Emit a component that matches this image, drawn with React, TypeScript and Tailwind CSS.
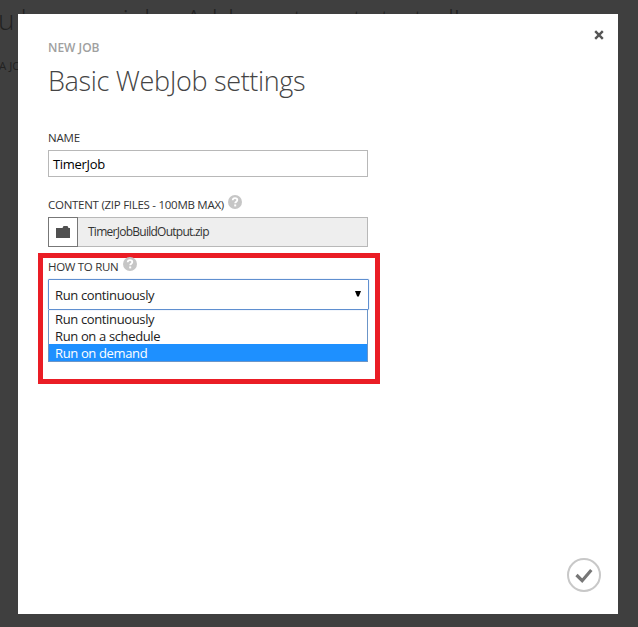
import React from 'react';

const RUN_MODES: readonly string[] = ['Run continuously', 'Run on a schedule', 'Run on demand'];

function HelpIcon({ className }: { readonly className: string }): React.JSX.Element {
  return (
    <svg className={className} width="14" height="14" viewBox="0 0 14 14">
      <circle cx="7" cy="7" r="7" fill="#c6c6c6" />
      <path
        d="M4.7 5.3C4.8 3.8 5.8 3.2 7 3.2c1.3 0 2.3.7 2.3 1.9 0 1.6-2.1 1.6-2.1 3.2"
        fill="none"
        stroke="#fff"
        strokeWidth="1.8"
      />
      <rect x="6.2" y="9.4" width="2" height="2" fill="#fff" />
    </svg>
  );
}

function FolderIcon(): React.JSX.Element {
  return (
    <svg width="14" height="12" viewBox="0 0 14 12">
      <path d="M0 2h6.5L7.5 0h4l1 2H14v10H0z" fill="#505050" />
    </svg>
  );
}

function Backdrop(): React.JSX.Element {
  return (
    <div className="h-full w-full whitespace-nowrap text-[#222]">
      <div className="-ml-[32px] text-[28px] leading-[38px] font-light tracking-[-0.63px]">
        You have no jobs. Add one to get started!
      </div>
      <div className="-ml-[28px] mt-[19px] text-[11.5px] leading-[18px]">ADD A JOB</div>
    </div>
  );
}

function RunModeSelect(): React.JSX.Element {
  return (
    <div className="w-[321px] text-[13px] tracking-[-0.36px] text-[#222]">
      <div className="flex h-[31px] items-center justify-between rounded-[1px] border border-[#5f8fd0] pt-[3px] pr-[7px] pl-[6px] shadow-[0_0_1px_#7ba3e0]">
        <span>{RUN_MODES[0]}</span>
        <svg className="-mt-[5px]" width="6" height="6" viewBox="0 0 6 6">
          <path d="M0 0h6L3.8 5.6H2.2z" fill="#000" />
        </svg>
      </div>
      <ul className="w-[320px] border border-t-0 border-[#6b95c8]">
        {RUN_MODES.map((mode) => (
          <li
            key={mode}
            className={
              mode === 'Run on demand'
                ? 'h-[17px] bg-[#1e90ff] pl-[6px] leading-[18px] text-white'
                : 'h-[17px] pl-[6px] leading-[18px]'
            }
          >
            {mode}
          </li>
        ))}
      </ul>
    </div>
  );
}

function JobDialog(): React.JSX.Element {
  return (
    <div className="absolute top-[14px] left-[18px] flex h-[600px] w-[600px] flex-col bg-white pl-[30px] text-[#333]">
      <div className="flex h-[44px] items-start justify-between pr-[14px]">
        <div className="mt-[25px] text-[12px] leading-[18px] font-semibold text-[#a0a0a0]">
          NEW JOB
        </div>
        <svg className="mt-[16px]" width="10" height="10" viewBox="0 0 10 10">
          <path d="M1.2 1.2l7.6 7.6M8.8 1.2L1.2 8.8" stroke="#555" strokeWidth="2.4" />
        </svg>
      </div>
      <h1 className="mt-[2px] h-[42px] text-[27px] leading-[41px] font-light tracking-[-0.34px] text-[#444]">
        Basic WebJob settings
      </h1>

      <label className="mt-[27px] h-[21px] text-[11.5px] leading-[17px] tracking-[-0.2px]">NAME</label>
      <div className="flex h-[27px] w-[320px] items-center border border-[#b8b8b8] pt-[2px] pl-[4px] text-[13px] tracking-[-0.3px] text-black">
        TimerJob
      </div>

      <div className="mt-[18px] flex h-[22px] text-[11.5px] leading-[19px] tracking-[-0.27px]">
        <span className="w-[176px] whitespace-nowrap">CONTENT (ZIP FILES - 100MB MAX)</span>
        <HelpIcon className="ml-[4px]" />
      </div>
      <div className="flex h-[30px] w-[320px]">
        <div className="flex w-[30px] items-center justify-center border border-[#777]">
          <FolderIcon />
        </div>
        <div className="flex flex-1 items-center border border-l-0 border-[#b8b8b8] bg-[#eee] pl-[10px] text-[12px] font-medium tracking-[-0.74px]">
          TimerJobBuildOutput.zip
        </div>
      </div>

      <div className="mt-[6px] -ml-[10px] h-[131px] w-[342px] border-5 border-[#ea1d25] pl-[5px]">
        <div className="flex h-[21px] text-[11.5px] leading-[17px] tracking-[-0.3px]">
          <span className="w-[70px] whitespace-nowrap">HOW TO RUN</span>
          <HelpIcon className="-mt-px ml-[5px]" />
        </div>
        <RunModeSelect />
      </div>

      <div className="mt-auto mr-[17px] mb-[22px] self-end">
        <svg width="34" height="34" viewBox="0 0 34 34">
          <circle cx="17" cy="17" r="16" fill="none" stroke="#c8c8c8" strokeWidth="2" />
          <path d="M9.5 17l5.7 5.7L24.3 12" fill="none" stroke="#777" strokeWidth="3.2" />
        </svg>
      </div>
    </div>
  );
}

export default function App(): React.JSX.Element {
  return (
    <div className="relative h-[627px] w-[638px] overflow-hidden bg-[#3f3f3f] font-['Open_Sans','Noto_Sans',sans-serif]">
      <Backdrop />
      <JobDialog />
    </div>
  );
}
